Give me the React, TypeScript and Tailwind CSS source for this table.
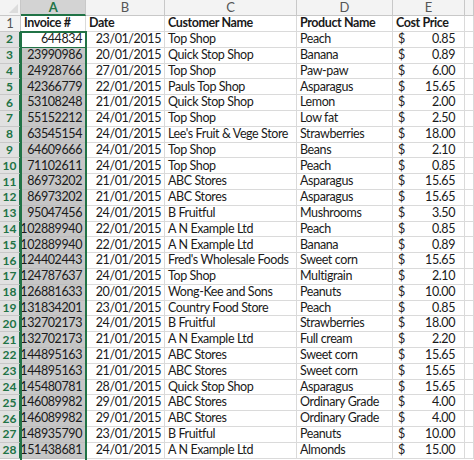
import React from "react";

type Row = [string, string, string, string, string];

const rows: Row[] = [
  ["644834", "23/01/2015", "Top Shop", "Peach", "0.85"],
  ["23990986", "20/01/2015", "Quick Stop Shop", "Banana", "0.89"],
  ["24928766", "27/01/2015", "Top Shop", "Paw-paw", "6.00"],
  ["42366779", "22/01/2015", "Pauls Top Shop", "Asparagus", "15.65"],
  ["53108248", "21/01/2015", "Quick Stop Shop", "Lemon", "2.00"],
  ["55152212", "24/01/2015", "Top Shop", "Low fat", "2.50"],
  ["63545154", "24/01/2015", "Lee's Fruit & Vege Store", "Strawberries", "18.00"],
  ["64609666", "24/01/2015", "Top Shop", "Beans", "2.10"],
  ["71102611", "24/01/2015", "Top Shop", "Peach", "0.85"],
  ["86973202", "21/01/2015", "ABC Stores", "Asparagus", "15.65"],
  ["86973202", "21/01/2015", "ABC Stores", "Asparagus", "15.65"],
  ["95047456", "24/01/2015", "B Fruitful", "Mushrooms", "3.50"],
  ["102889940", "22/01/2015", "A N Example Ltd", "Peach", "0.85"],
  ["102889940", "22/01/2015", "A N Example Ltd", "Banana", "0.89"],
  ["124402443", "21/01/2015", "Fred's Wholesale Foods", "Sweet corn", "15.65"],
  ["124787637", "24/01/2015", "Top Shop", "Multigrain", "2.10"],
  ["126881633", "20/01/2015", "Wong-Kee and Sons", "Peanuts", "10.00"],
  ["131834201", "23/01/2015", "Country Food Store", "Peach", "0.85"],
  ["132702173", "24/01/2015", "B Fruitful", "Strawberries", "18.00"],
  ["132702173", "21/01/2015", "A N Example Ltd", "Full cream", "2.20"],
  ["144895163", "21/01/2015", "ABC Stores", "Sweet corn", "15.65"],
  ["144895163", "21/01/2015", "ABC Stores", "Sweet corn", "15.65"],
  ["145480781", "28/01/2015", "Quick Stop Shop", "Asparagus", "15.65"],
  ["146089982", "29/01/2015", "ABC Stores", "Ordinary Grade", "4.00"],
  ["146089982", "29/01/2015", "ABC Stores", "Ordinary Grade", "4.00"],
  ["148935790", "23/01/2015", "B Fruitful", "Peanuts", "10.00"],
  ["151438681", "24/01/2015", "A N Example Ltd", "Almonds", "15.00"],
];

const cols = "grid-cols-[21px_65px_79px_132px_96px_72px_1fr]";
const cell = "border-r border-b border-[#dadada] px-[3px] whitespace-nowrap overflow-hidden leading-none flex items-center";
const hdr = "border-r border-b border-[#c8c8c8] bg-[#f3f3f3] text-[#555] text-[13px] tracking-normal flex items-center justify-center leading-none";

export default function App() {
  return (
    <div className="w-[474px] h-[460px] overflow-hidden bg-white text-[12.5px] tracking-[-0.4px] text-[#1a1a1a] font-['Lato','Liberation_Sans',sans-serif]">
      <div className="relative">
        {/* column headers */}
        <div className={`grid ${cols} h-[16px]`}>
          <div className={`${hdr} relative`}>
            <svg className="absolute right-[2px] bottom-[2px]" width="9" height="9" viewBox="0 0 9 9">
              <polygon points="9,0 9,9 0,9" fill="#dcdcdc" />
            </svg>
          </div>
          <div className="bg-[#d3d3d3] border-r border-[#c8c8c8] border-b-2 border-b-[#217346] text-[#217346] text-[13px] font-bold flex items-center justify-center leading-none">
            A
          </div>
          <div className={hdr}>B</div>
          <div className={hdr}>C</div>
          <div className={hdr}>D</div>
          <div className={hdr}>E</div>
          <div className={hdr}></div>
        </div>

        {/* header row 1 */}
        <div className={`grid ${cols} h-[16px]`}>
          <div className={`${hdr} border-r-[#c8c8c8]`}>1</div>
          <div className={`${cell} font-bold`}>Invoice #</div>
          <div className={`${cell} font-bold`}>Date</div>
          <div className={`${cell} font-bold`}>Customer Name</div>
          <div className={`${cell} font-bold`}>Product Name</div>
          <div className={`${cell} font-bold`}>Cost Price</div>
          <div className={cell}></div>
        </div>

        {rows.map((r, i) => (
          <div key={i} className={`grid ${cols} h-[15.8px]`}>
            <div className="bg-[#e1e1e1] border-b border-[#c8c8c8] border-r-2 border-r-[#217346] text-[#217346] text-[12px] font-bold tracking-normal flex items-center justify-center leading-none">
              {i + 2}
            </div>
            <div className={`${cell} justify-end ${i === 0 ? "bg-white" : "bg-[#c6c6c6] border-b-[#bdbdbd]"}`}>{r[0]}</div>
            <div className={`${cell} justify-end`}>{r[1]}</div>
            <div className={cell}>{r[2]}</div>
            <div className={cell}>{r[3]}</div>
            <div className={`${cell} justify-between`}>
              <span className="pl-[2px]">$</span>
              <span className="pr-[6px]">{r[4]}</span>
            </div>
            <div className={cell}></div>
          </div>
        ))}

        {/* selection outline over column A */}
        <div className="absolute left-[20px] top-[31px] w-[67px] h-[440px] border-2 border-[#217346] pointer-events-none" />
        <div className="absolute left-[21px] top-[32px] w-[65px] h-[16px] border border-[#217346] pointer-events-none" />
      </div>
    </div>
  );
}
